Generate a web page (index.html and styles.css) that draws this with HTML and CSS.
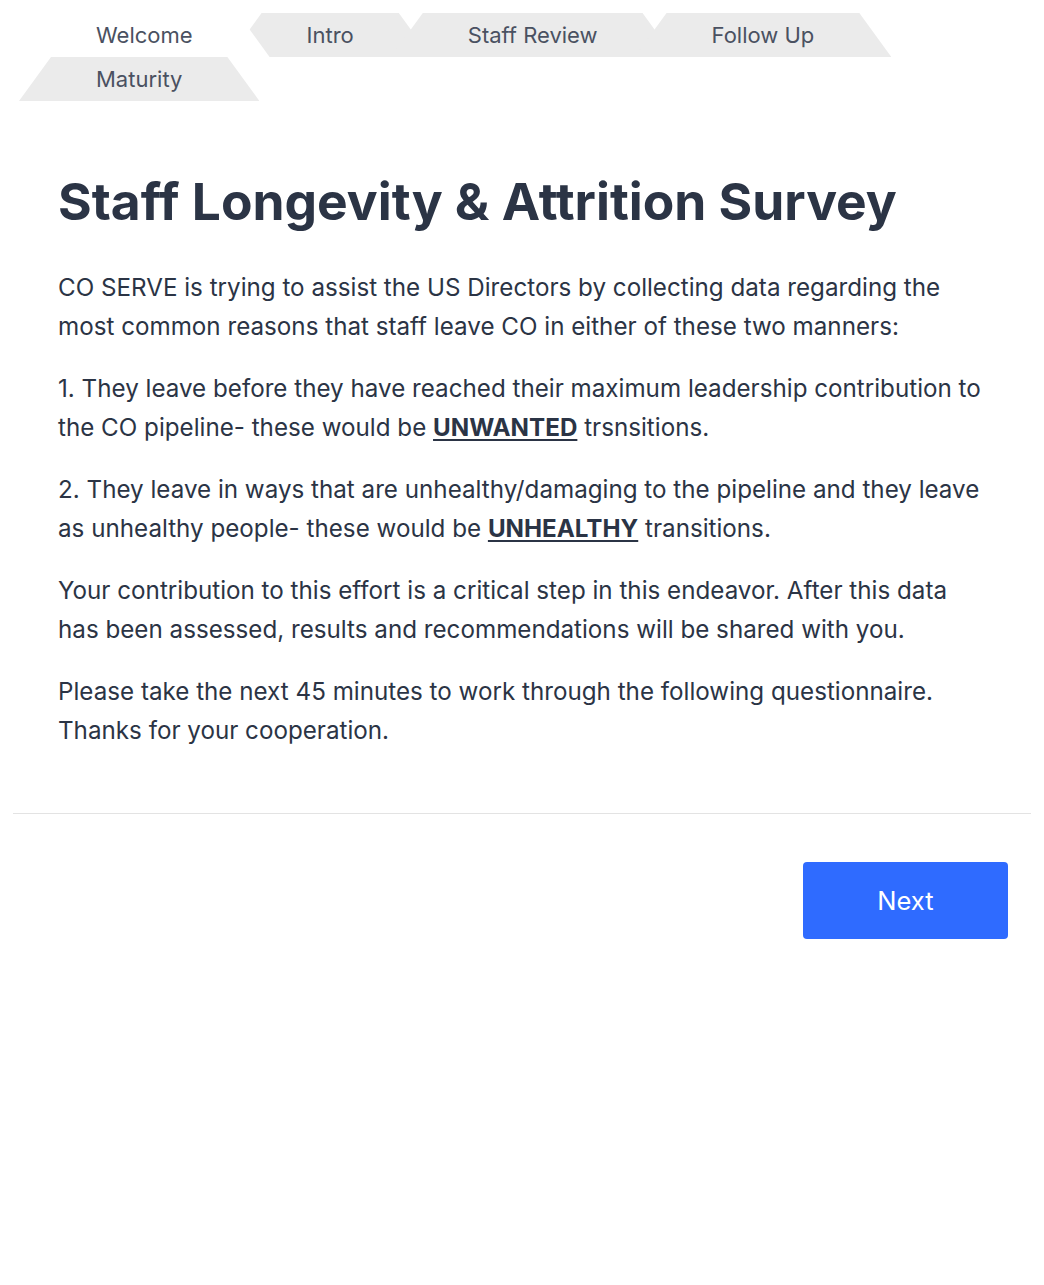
FILE: index.html
```html
<!DOCTYPE html>
<html lang="en">
<head>
    <meta charset="UTF-8">
    <meta name="viewport" content="width=device-width, initial-scale=1.0">
    <title>Staff Longevity &amp; Attrition Survey</title>
    <link rel="stylesheet" href="styles.css">
</head>
<body>
    <ul class="tabs">
        <li class="tab active">Welcome</li>
        <li class="tab">Intro</li>
        <li class="tab">Staff Review</li>
        <li class="tab">Follow Up</li>
        <li class="tab">Maturity</li>
    </ul>

    <div class="survey">
        <div class="page">
            <h1>Staff Longevity &amp; Attrition Survey</h1>
            <p>CO SERVE is trying to assist the US Directors by collecting data regarding the most common reasons that staff leave CO in either of these two manners:</p>
            <p>1. They leave before they have reached their maximum leadership contribution to the CO pipeline- these would be <strong>UNWANTED</strong> trsnsitions.</p>
            <p>2. They leave in ways that are unhealthy/damaging to the pipeline and they leave as unhealthy people- these would be <strong>UNHEALTHY</strong> transitions.</p>
            <p>Your contribution to this effort is a critical step in this endeavor. After this data has been assessed, results and recommendations will be shared with you.</p>
            <p>Please take the next 45 minutes to work through the following questionnaire. Thanks for your cooperation.</p>
        </div>
        <div class="nav">
            <button type="button">Next</button>
        </div>
    </div>
</body>
</html>
```

FILE: styles.css
```css
body {
    font-family: Inter, "Noto Sans", sans-serif;
    color: #2b3445;
    margin: 0;
    background: #fff;
}
.tabs {
    display: flex;
    flex-wrap: wrap;
    list-style: none;
    margin: 0;
    padding: 13px 19px 0;
}
.tab {
    position: relative;
    height: 44px;
    line-height: 45px;
    padding: 0 77px;
    margin-right: -40px;
    font-size: 22px;
    color: #4a5161;
    background: #ebebeb;
    clip-path: polygon(32px 0, calc(100% - 32px) 0, 100% 100%, 0 100%);
}
.tab.active {
    background: #fff;
    z-index: 1;
}
.survey {
    margin: 0 13px;
}
.page {
    padding: 70px 45px 40px;
}
h1 {
    font-size: 51.5px;
    font-weight: 700;
    margin: 0 0 35px;
    line-height: 1.2;
}
p {
    font-size: 24.2px;
    line-height: 39px;
    margin: 0 0 23px;
}
strong {
    text-decoration: underline;
    text-underline-offset: 3px;
}
.nav {
    border-top: 1px solid #e3e3e3;
    display: flex;
    justify-content: flex-end;
    padding: 48px 23px;
}
button {
    width: 205px;
    height: 77px;
    border: none;
    border-radius: 4px;
    background-color: #2f6bff;
    color: #fff;
    font-family: inherit;
    font-size: 25.5px;
    cursor: pointer;
}
```
